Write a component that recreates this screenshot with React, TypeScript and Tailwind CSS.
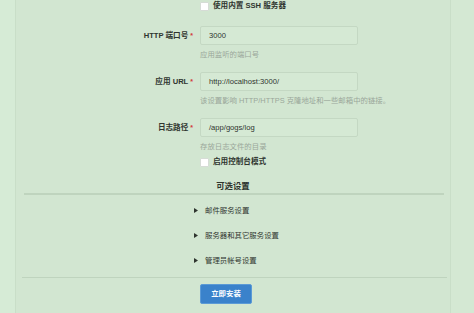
const font = { fontFamily: '"Liberation Sans", "Noto Sans CJK SC", sans-serif' };

function Field({ label, value, hint, top }: { label: string; value: string; hint: string; top: string }) {
  return (
    <>
      <div className={`flex items-center ${top}`}>
        <div className="w-[184px] pr-[7px] text-right text-[7.6px] font-bold text-[#2f352f] leading-[10px]">
          {label}
          <span className="ml-[2px] align-top text-[7px] text-[#d23b3b]">*</span>
        </div>
        <div className="h-[19px] w-[158px] rounded-[2px] border border-[#c4d8c3] bg-[#d5e9d4] pl-[8px] flex items-center text-[7.6px] text-[#2f352f]">
          {value}
        </div>
      </div>
      <div className="ml-[184px] mt-[5px] text-[7.4px] leading-[10px] text-[#9aa79a]">{hint}</div>
    </>
  );
}

function Check({ label, top }: { label: string; top: string }) {
  return (
    <div className={`ml-[184px] flex h-[12px] items-center gap-[4px] ${top}`}>
      <div className="h-[9px] w-[9px] rounded-[1px] border border-[#d6dcd6] bg-white" />
      <span className="text-[7.6px] font-bold text-[#2f352f] leading-[10px]">{label}</span>
    </div>
  );
}

function Item({ label, top }: { label: string; top: string }) {
  return (
    <div className={`ml-[178px] flex h-[10px] items-center gap-[7px] ${top}`}>
      <svg width="4" height="5" viewBox="0 0 4 5">
        <path d="M0 0 L4 2.5 L0 5 Z" fill="#2f352f" />
      </svg>
      <span className="text-[7.4px] text-[#2f352f] leading-[10px]">{label}</span>
    </div>
  );
}

export default function App() {
  return (
    <div className="flex h-[313px] w-[474px] overflow-hidden bg-[#d2e6d1]" style={font}>
      <div className="w-[16px] shrink-0 border-r border-[#c9dec8] bg-[#d6ebd6]" />
      <div className="flex w-[434px] shrink-0 flex-col">
        <Check label="使用内置 SSH 服务器" top="mt-0" />
        <div className="mt-[14px]" />
        <Field label="HTTP 端口号" value="3000" hint="应用监听的端口号" top="" />
        <div className="mt-[2px]" />
        <Field label="应用 URL" value="http://localhost:3000/" hint="该设置影响 HTTP/HTTPS 克隆地址和一些邮箱中的链接。" top="mt-[10px]" />
        <Field label="日志路径" value="/app/gogs/log" hint="存放日志文件的目录" top="mt-[12px]" />
        <Check label="启用控制台模式" top="mt-[4px]" />
        <div className="mt-[12px] text-center text-[8.4px] font-bold leading-[12px] text-[#2f352f]">可选设置</div>
        <div className="ml-[8px] mr-[6px] mt-[1px] h-[1.5px] bg-[#bfd4be]" />
        <Item label="邮件服务设置" top="mt-[11px]" />
        <Item label="服务器和其它服务设置" top="mt-[15px]" />
        <Item label="管理员帐号设置" top="mt-[15px]" />
        <div className="ml-[6px] mr-[3px] mt-[11px] h-[1.5px] bg-[#bfd4be]" />
        <div className="ml-[184px] mt-[6px]">
          <button className="flex h-[20px] w-[52px] items-center justify-center rounded-[2px] border border-[#5b9ad6] bg-[#3a82cb] text-[7.4px] font-bold text-white">
            立即安装
          </button>
        </div>
      </div>
      <div className="flex-1 border-l border-[#c9dec8] bg-[#d4e8d3]" />
    </div>
  );
}
